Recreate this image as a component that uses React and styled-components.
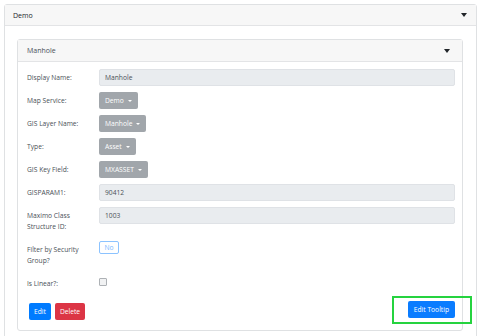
import React from "react";
import styled, { createGlobalStyle } from "styled-components";

const GlobalStyle = createGlobalStyle`
  html, body {
    margin: 0;
    background: #fff;
    overflow: hidden;
  }
  body {
    font-family: "Open Sans", "Liberation Sans", sans-serif;
    color: #212529;
  }
`;

const fields = [
  { label: "Display Name:", kind: "input", value: "Manhole" },
  { label: "Map Service:", kind: "select", value: "Demo" },
  { label: "GIS Layer Name:", kind: "select", value: "Manhole" },
  { label: "Type:", kind: "select", value: "Asset" },
  { label: "GIS Key Field:", kind: "select", value: "MXASSET" },
  { label: "GISPARAM1:", kind: "input", value: "90412" },
  { label: "Maximo Class Structure ID:", kind: "input", value: "1003", wrap: true },
  { label: "Filter by Security Group?", kind: "toggle", value: "No", wrap: true },
  { label: "Is Linear?:", kind: "check" },
];

const Caret = () => (
  <svg width="6" height="4" viewBox="0 0 6 4">
    <path d="M0 0h6L3 4z" fill="#212529" />
  </svg>
);

export default function App() {
  return (
    <Page>
      <GlobalStyle />
      <Card>
        <Header>
          <span>Demo</span>
          <Caret />
        </Header>
        <OuterBody>
          <InnerCard>
            <Header $inner>
              <span>Manhole</span>
              <Caret />
            </Header>
            <InnerBody>
              {fields.map((f) => (
                <Row key={f.label}>
                  <Label $wrap={f.wrap}>{f.label}</Label>
                  <Control>
                    {f.kind === "input" && <Input>{f.value}</Input>}
                    {f.kind === "select" && (
                      <SelectButton>
                        {f.value}
                        <SmallCaret />
                      </SelectButton>
                    )}
                    {f.kind === "toggle" && <Toggle>{f.value}</Toggle>}
                    {f.kind === "check" && <Check />}
                  </Control>
                </Row>
              ))}
              <Actions>
                <Group>
                  <Button $color="#007bff">Edit</Button>
                  <Button $color="#dc3545">Delete</Button>
                </Group>
                <Highlight>
                  <Button $color="#0a7cff" $wide>
                    Edit Tooltip
                  </Button>
                </Highlight>
              </Actions>
            </InnerBody>
          </InnerCard>
          <InnerCard>
            <Header $inner />
          </InnerCard>
        </OuterBody>
      </Card>
    </Page>
  );
}

const Page = styled.div`
  padding: 4px 3px 0 4px;
  height: 332px;
  overflow: hidden;
`;

const Card = styled.div`
  border: 1px solid #dfe1e3;
  border-radius: 3px;
  background: #fff;
`;

const Header = styled.div`
  display: flex;
  align-items: center;
  justify-content: space-between;
  height: ${(p) => (p.$inner ? "21px" : "20px")};
  padding: 0 ${(p) => (p.$inner ? "12px" : "9px")} 0
    ${(p) => (p.$inner ? "9px" : "8px")};
  background: #f7f7f7;
  border-bottom: 1px solid #e3e4e6;
  font-size: 7px;
  color: ${(p) => (p.$inner ? "#495057" : "#212529")};
`;

const OuterBody = styled.div`
  display: flex;
  flex-direction: column;
  gap: 5px;
  padding: 13px 13px 0 12px;
`;

const InnerCard = styled.div`
  border: 1px solid #dfe1e3;
  border-radius: 3px;
  background: #fff;
`;

const InnerBody = styled.div`
  display: flex;
  flex-direction: column;
  padding: 7px 7px 10px 9px;
`;

const Row = styled.div`
  display: flex;
  align-items: flex-start;
  margin-bottom: 6px;
`;

const Label = styled.div`
  width: 72px;
  flex-shrink: 0;
  padding: 3px 0;
  font-size: 6.7px;
  line-height: 11px;
  color: #495057;
  padding-right: ${(p) => (p.$wrap ? "14px" : "0")};
  box-sizing: border-box;
`;

const Control = styled.div`
  flex: 1;
  display: flex;
`;

const Input = styled.div`
  flex: 1;
  height: 17px;
  box-sizing: border-box;
  display: flex;
  align-items: center;
  padding: 0 5px;
  background: #e9ecef;
  border: 1px solid #dfe2e6;
  border-radius: 2px;
  font-size: 6.7px;
  color: #495057;
`;

const SelectButton = styled.div`
  display: flex;
  align-items: center;
  gap: 4px;
  height: 17px;
  box-sizing: border-box;
  padding: 0 6px;
  background: #a1a6ab;
  border-radius: 2px;
  color: #fff;
  font-size: 6.7px;
`;

const SmallCaret = styled.span`
  width: 0;
  height: 0;
  border-left: 2px solid transparent;
  border-right: 2px solid transparent;
  border-top: 2px solid #fff;
`;

const Toggle = styled.div`
  height: 13px;
  width: 20px;
  box-sizing: border-box;
  display: flex;
  align-items: center;
  justify-content: center;
  border: 1px solid #8cc3ff;
  border-radius: 2px;
  color: #7ab8ff;
  font-size: 6.7px;
`;

const Check = styled.div`
  width: 6px;
  height: 6px;
  margin-top: 3px;
  border: 1px solid #adb1b5;
  border-radius: 1px;
  background: #f1f2f3;
`;

const Actions = styled.div`
  display: flex;
  align-items: flex-start;
  justify-content: space-between;
  margin-top: 2px;
`;

const Group = styled.div`
  display: flex;
  gap: 4px;
  padding-left: 2px;
  margin-top: 3px;
`;

const Button = styled.div`
  height: 17px;
  box-sizing: border-box;
  display: flex;
  align-items: center;
  padding: 0 ${(p) => (p.$wide ? "6px" : "5px")};
  background: ${(p) => p.$color};
  border-radius: 2px;
  color: #fff;
  font-size: 6.7px;
`;

const Highlight = styled.div`
  position: relative;
  margin-top: 1px;
  &::after {
    content: "";
    position: absolute;
    inset: -5px -17px -6px -16px;
    border: 2px solid #25d33f;
    pointer-events: none;
  }
`;
